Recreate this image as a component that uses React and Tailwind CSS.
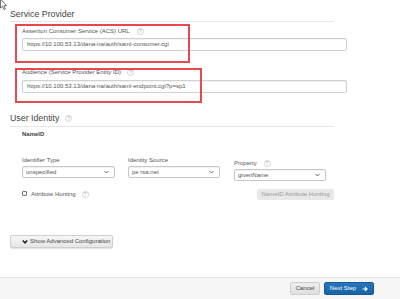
const font = { fontFamily: '"Liberation Sans", Arial, sans-serif' };

function Help({ className = "" }) {
  return (
    <span
      className={`inline-flex h-[7px] w-[7px] items-center justify-center rounded-full border border-[#d4d4d4] text-[5px] leading-none text-[#aaa] ${className}`}
    >
      ?
    </span>
  );
}

function Chevron() {
  return (
    <svg width="5" height="4" viewBox="0 0 10 7" className="shrink-0">
      <path d="M1 1.5 L5 5.5 L9 1.5" fill="none" stroke="#555" strokeWidth="1.8" />
    </svg>
  );
}

function FakeSelect({ value, width }) {
  return (
    <div
      className={`flex h-[12px] ${width} items-center justify-between rounded-[2px] border border-[#c8c8c8] bg-white pl-[3px] pr-[5px] text-[6px] text-[#555] shadow-[inset_0_1px_1px_rgba(0,0,0,0.06)]`}
    >
      <span>{value}</span>
      <Chevron />
    </div>
  );
}

function TextInput({ value }) {
  return (
    <div className="ml-[22px] flex h-[13px] w-[325px] items-center rounded-[2px] border border-[#d0d0d0] bg-white pl-[4px] text-[6px] text-[#555] shadow-[inset_0_1px_1px_rgba(0,0,0,0.05)]">
      {value}
    </div>
  );
}

export default function App() {
  return (
    <div
      className="relative flex h-[299px] w-[400px] flex-col overflow-hidden bg-white text-[#555]"
      style={font}
    >
      {/* cursor */}
      <svg className="absolute left-0 top-0" width="7" height="11" viewBox="0 0 7 11">
        <path d="M0.5 -1 L0.5 8 L2.5 6.2 L4 9.5 L5.3 8.9 L3.9 5.7 L6.5 5.6 Z" fill="#fff" stroke="#333" strokeWidth="0.7" />
      </svg>

      <div className="flex-1">
        {/* SERVICE PROVIDER */}
        <div className="ml-[10px] mt-[9px] h-[13px] w-[324px] border-b border-[#e6e6e6] text-[8.8px] leading-[10px] text-[#444]">
          Service Provider
        </div>

        <div className="ml-[22px] mt-[5px] flex h-[8px] items-center text-[6px]">
          <span>Assertion Consumer Service (ACS) URL</span>
          <Help className="ml-[7px]" />
        </div>
        <div className="mt-[3px]">
          <TextInput value="https://10.100.53.13/dana-na/auth/saml-consumer.cgi" />
        </div>

        <div className="ml-[22px] mt-[17px] flex h-[8px] items-center text-[6px]">
          <span>Audience (Service Provider Entity ID)</span>
          <Help className="ml-[6px]" />
        </div>
        <div className="mt-[4px]">
          <TextInput value="https://10.100.53.13/dana-na/auth/saml-endpoint.cgi?p=sp1" />
        </div>

        {/* USER IDENTITY */}
        <div className="ml-[10px] mt-[20px] flex h-[14px] w-[324px] items-start border-b border-[#e6e6e6] text-[8.8px] leading-[10px] text-[#444]">
          <span>User Identity</span>
          <Help className="ml-[6px] mt-[2px]" />
        </div>

        <div className="ml-[22px] mt-[4px] text-[6px] font-bold leading-[7px] text-[#444]">NameID</div>

        <div className="ml-[22px] mt-[18px] flex items-start">
          <div className="w-[93px]">
            <div className="flex h-[8px] items-center text-[6px]">Identifier Type</div>
            <div className="mt-[2px]">
              <FakeSelect value="unspecified" width="w-[93px]" />
            </div>
          </div>
          <div className="ml-[13px] w-[92px]">
            <div className="flex h-[8px] items-center text-[6px]">Identity Source</div>
            <div className="mt-[2px]">
              <FakeSelect value="pe rsa.net" width="w-[92px]" />
            </div>
          </div>
          <div className="ml-[14px] mt-[3px] w-[92px]">
            <div className="flex h-[8px] items-center text-[6px]">
              <span>Property</span>
              <Help className="ml-[7px]" />
            </div>
            <div className="mt-[2px]">
              <FakeSelect value="givenName" width="w-[92px]" />
            </div>
          </div>
        </div>

        <div className="ml-[22px] mt-[8px] flex h-[11px] w-[312px] items-center">
          <span className="mb-[2px] h-[5px] w-[5px] rounded-[1px] border border-[#777] bg-white" />
          <span className="ml-[4px] text-[6px]">Attribute Hunting</span>
          <Help className="ml-[6px]" />
          <div className="ml-auto flex h-[11px] w-[77px] items-center justify-center rounded-[2px] bg-[#e8e8e8] text-[6px] text-[#9a9a9a]">
            NameID Attribute Hunting
          </div>
        </div>

        <div className="ml-[10px] mt-[35px] flex h-[13px] w-[103px] items-center rounded-[2px] border border-[#cfcfcf] bg-[linear-gradient(#f6f6f6,#e6e6e6)] pl-[11px] text-[6px] text-[#444] shadow-[0_1px_1px_rgba(0,0,0,0.12)]">
          <svg width="6" height="4" viewBox="0 0 10 7" className="mr-[2px]">
            <path d="M1 1 L5 5 L9 1" fill="none" stroke="#222" strokeWidth="2.6" />
          </svg>
          Show Advanced Configuration
        </div>
      </div>

      {/* FOOTER */}
      <div className="flex h-[22px] items-center justify-end gap-[4px] border-t border-[#e6e6e6] bg-[#f6f6f6] pr-[26px]">
        <div className="flex h-[13px] w-[30px] items-center justify-center rounded-[2px] border border-[#cdcdcd] bg-[linear-gradient(#eeeeee,#e0e0e0)] text-[6px] text-[#444]">
          Cancel
        </div>
        <div className="flex h-[13px] w-[50px] items-center justify-center gap-[6px] rounded-[2px] border border-[#155a96] bg-[linear-gradient(#2577bd,#1a62a3)] text-[6px] text-white">
          <span>Next Step</span>
          <svg width="6" height="6" viewBox="0 0 10 10">
            <path d="M1 5 H8 M5 1.8 L8.3 5 L5 8.2" fill="none" stroke="#fff" strokeWidth="2" />
          </svg>
        </div>
      </div>

      {/* annotation boxes */}
      <div className="absolute left-[15px] top-[24px] h-[39px] w-[175px] border-2 border-[#e5484d]" />
      <div className="absolute left-[15px] top-[68px] h-[35px] w-[187px] border-2 border-[#e5484d]" />
    </div>
  );
}
